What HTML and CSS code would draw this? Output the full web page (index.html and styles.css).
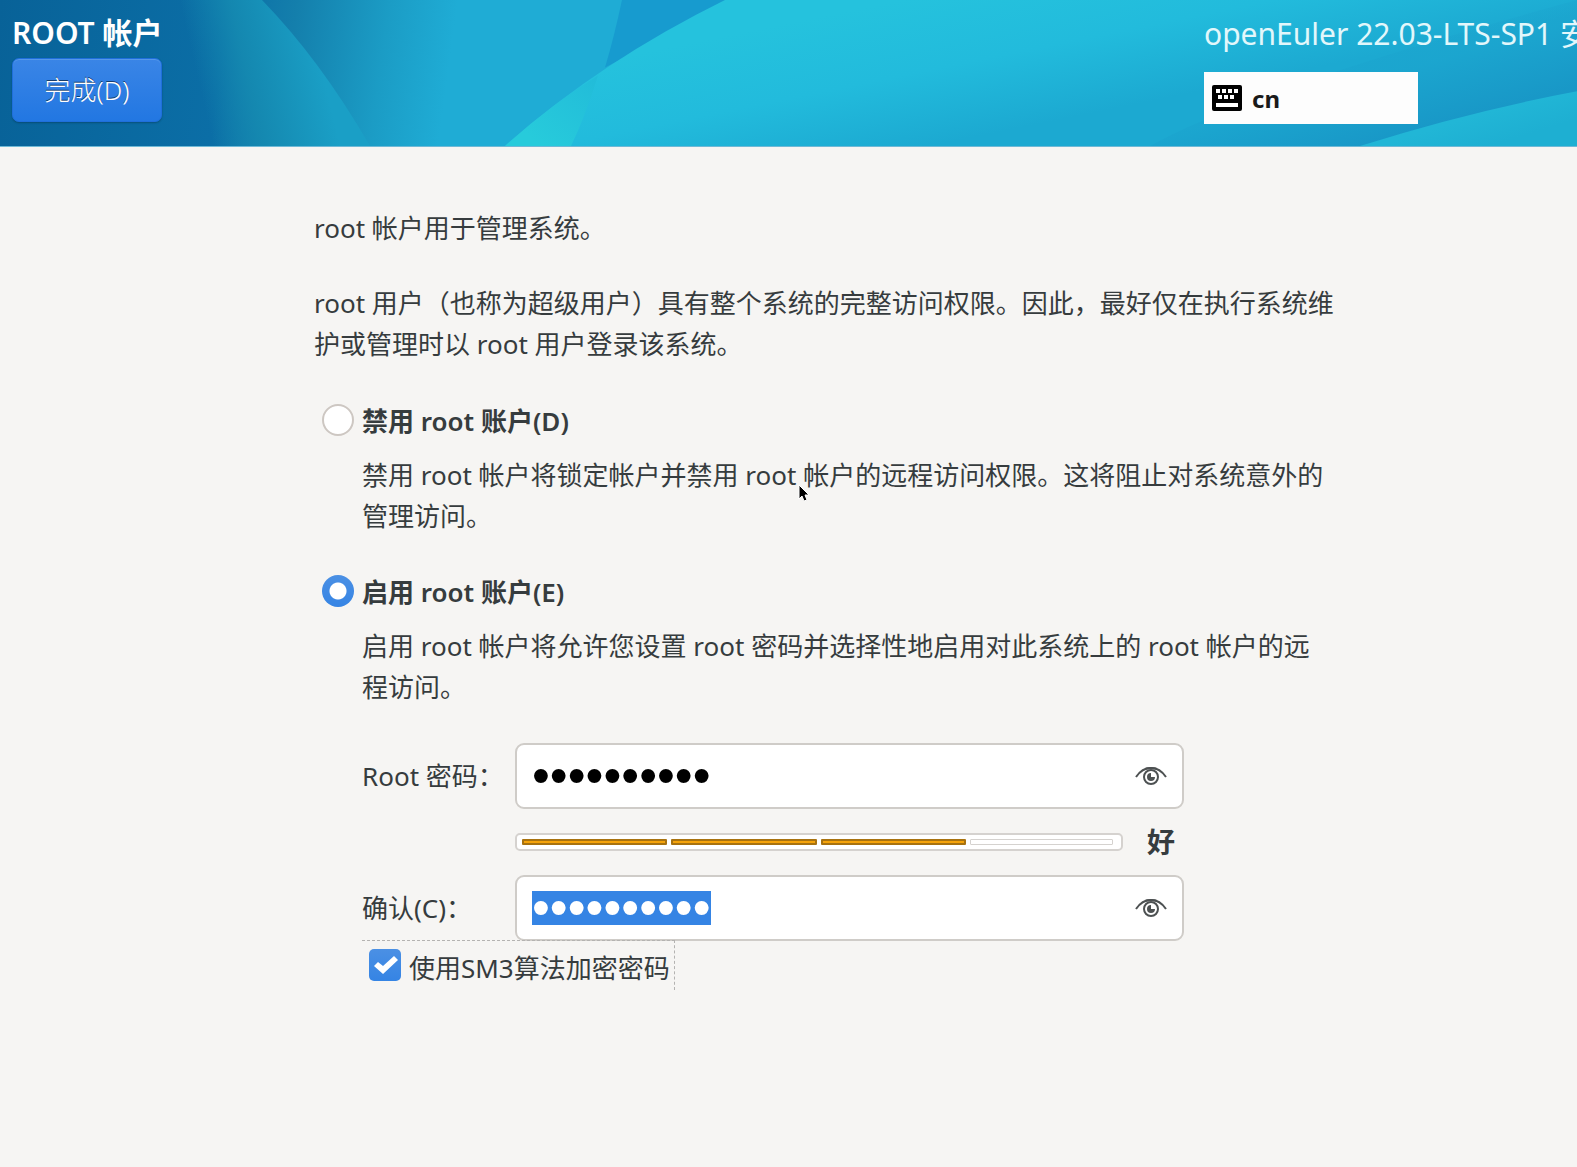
FILE: index.html
```html
<!DOCTYPE html>
<html lang="zh-CN">
<head>
<meta charset="utf-8">
<meta name="viewport" content="width=device-width, initial-scale=1">
<title>ROOT 帐户</title>
<link rel="stylesheet" href="styles.css">
</head>
<body>
<header class="banner">
  <svg class="banner-art" viewBox="0 0 1577 147" preserveAspectRatio="none" aria-hidden="true">
    <defs>
      <linearGradient id="base" gradientUnits="userSpaceOnUse" x1="0" y1="0" x2="450" y2="60">
        <stop offset="0" stop-color="#086298"/>
        <stop offset=".5" stop-color="#0b6ea6"/>
        <stop offset=".65" stop-color="#147fac"/>
        <stop offset=".85" stop-color="#1b9cc5"/>
        <stop offset="1" stop-color="#1facd5"/>
      </linearGradient>
      <linearGradient id="ray" gradientUnits="userSpaceOnUse" x1="200" y1="88" x2="320" y2="60">
        <stop offset="0" stop-color="#148ab0" stop-opacity="0"/>
        <stop offset=".4" stop-color="#158ab1" stop-opacity=".9"/>
        <stop offset="1" stop-color="#1a9fc6"/>
      </linearGradient>
      <linearGradient id="wave" gradientUnits="userSpaceOnUse" x1="900" y1="0" x2="930" y2="147">
        <stop offset="0" stop-color="#25c2dd"/>
        <stop offset=".5" stop-color="#22bbdc"/>
        <stop offset="1" stop-color="#1ca9d1"/>
      </linearGradient>
      <linearGradient id="shade" gradientUnits="userSpaceOnUse" x1="1390" y1="10" x2="1425" y2="130">
        <stop offset="0" stop-color="#1896c6" stop-opacity="0"/>
        <stop offset=".5" stop-color="#1896c6" stop-opacity=".2"/>
        <stop offset="1" stop-color="#1896c6" stop-opacity=".9"/>
      </linearGradient>
      <linearGradient id="glint" gradientUnits="userSpaceOnUse" x1="595" y1="80" x2="540" y2="147">
        <stop offset="0" stop-color="#22bcd9"/>
        <stop offset="1" stop-color="#27cbdb"/>
      </linearGradient>
      <linearGradient id="corner" gradientUnits="userSpaceOnUse" x1="1480" y1="115" x2="1490" y2="147">
        <stop offset="0" stop-color="#21b6d6"/>
        <stop offset="1" stop-color="#1eafd2"/>
      </linearGradient>
    </defs>
    <rect width="1577" height="147" fill="url(#base)"/>
    <path d="M0 0H262Q320 60 370 147H0Z" fill="url(#ray)"/>
    <path d="M622 0Q614 38 605 68L735 0Z" fill="#179bcf"/>
    <path d="M725 0Q600 62 505 147H1577V0Z" fill="url(#wave)"/>
    <path d="M598 76Q550 106 505 147H571Q585 118 598 76Z" fill="url(#glint)"/>
    <path d="M1150 147Q1250 90 1577 0V147Z" fill="url(#shade)"/>
    <path d="M1577 92Q1470 112 1360 147H1577Z" fill="url(#corner)"/>
  </svg>
  <div class="banner-left">
    <h1 class="title">ROOT 帐户</h1>
    <button class="done" type="button">完成(D)</button>
  </div>
  <div class="banner-right">
    <p class="product">openEuler 22.03-LTS-SP1 安装</p>
    <button class="keyboard" type="button">
      <svg width="30" height="26" viewBox="0 0 30 26" aria-hidden="true">
        <rect width="30" height="26" rx="2" fill="#000"/>
        <path fill="#fff" d="M4 4h4v4H4zM10 4h4v4h-4zM16 4h4v4h-4zM22 4h4v4h-4zM6 10h4v4H6zM12 10h4v4h-4zM18 10h4v4h-4zM4 18h22v4H4z"/>
      </svg>
      <span>cn</span>
    </button>
  </div>
</header>

<main class="content">
  <p class="intro">root 帐户用于管理系统。</p>
  <p class="intro">root 用户（也称为超级用户）具有整个系统的完整访问权限。因此，最好仅在执行系统维护或管理时以 root 用户登录该系统。</p>

  <form class="options">
    <section class="option">
      <input class="radio" type="radio" name="root" id="disable">
      <label class="option-title" for="disable">禁用 root 账户(D)</label>
      <p class="option-text">禁用 root 帐户将锁定帐户并禁用 root 帐户的远程访问权限。这将阻止对系统意外的管理访问。</p>
    </section>

    <section class="option">
      <input class="radio" type="radio" name="root" id="enable" checked>
      <label class="option-title" for="enable">启用 root 账户(E)</label>
      <p class="option-text">启用 root 帐户将允许您设置 root 密码并选择性地启用对此系统上的 root 帐户的远程访问。</p>
    </section>

    <div class="fields">
      <label for="password">Root 密码：</label>
      <div class="entry">
        <input class="secret" type="password" id="password" value="openeuler1">
        <button class="reveal" type="button" aria-label="显示密码">
          <svg width="32" height="20" viewBox="0 0 32 20" fill="none" stroke="#4d5152" aria-hidden="true">
            <path stroke-width="2" d="M1 11Q7 2 16 2T31 11"/>
            <path stroke-width="2" d="M10 3Q16 1 22 3"/>
            <circle cx="16" cy="11" r="7" stroke-width="2"/>
            <path fill="#4d5152" stroke="none" d="M16 7a4 4 0 1 0 4 4h-4z"/>
          </svg>
        </button>
      </div>

      <div class="strength">
        <div class="level" role="meter" aria-label="密码强度" aria-valuemin="0" aria-valuemax="4" aria-valuenow="3">
          <span class="block full"></span><span class="block full"></span><span class="block full"></span><span class="block"></span>
        </div>
        <strong class="rating">好</strong>
      </div>

      <label for="confirm">确认(C)：</label>
      <div class="entry">
        <input class="secret selected" type="password" id="confirm" value="openeuler1">
        <button class="reveal" type="button" aria-label="显示密码">
          <svg width="32" height="20" viewBox="0 0 32 20" fill="none" stroke="#4d5152" aria-hidden="true">
            <path stroke-width="2" d="M1 11Q7 2 16 2T31 11"/>
            <path stroke-width="2" d="M10 3Q16 1 22 3"/>
            <circle cx="16" cy="11" r="7" stroke-width="2"/>
            <path fill="#4d5152" stroke="none" d="M16 7a4 4 0 1 0 4 4h-4z"/>
          </svg>
        </button>
      </div>
    </div>

    <label class="sm3">
      <input class="check" type="checkbox" checked>
      <span>使用SM3算法加密密码</span>
    </label>
  </form>
</main>

<svg class="pointer" width="12" height="19" viewBox="0 0 12 19" aria-hidden="true">
  <path d="M1 1V15L4 12L6 17L9 16L7 11H11Z" fill="#000" stroke="#fff" stroke-width="1"/>
</svg>
</body>
</html>
```

FILE: styles.css
```css
* {
  box-sizing: border-box;
}

body {
  margin: 0;
  min-height: 100vh;
  overflow-x: hidden;
  background: #f6f5f3;
  color: #363c3e;
  font-family: "Noto Sans", "Noto Sans CJK SC", sans-serif;
  font-size: 26px;
  line-height: 41px;
}

h1,
p {
  margin: 0;
}

button,
input {
  margin: 0;
  font: inherit;
}

/* Banner */
.banner {
  position: relative;
  display: flex;
  justify-content: space-between;
  height: 147px;
  padding-left: 12px;
  overflow: hidden;
  border-bottom: 1px solid #6fb9d6;
}

.banner-art {
  position: absolute;
  inset: 0;
  width: 100%;
  height: 100%;
}

.banner-left,
.banner-right {
  position: relative;
  display: flex;
  flex-direction: column;
  align-items: flex-start;
}

.banner-left {
  padding-top: 12px;
}

.banner-right {
  flex: 0 0 373px;
  min-width: 0;
  padding-top: 13px;
  gap: 18px;
}

.title {
  color: #fff;
  font-size: 30px;
  font-weight: 600;
  line-height: 41px;
  margin-bottom: 5px;
}

.done {
  width: 150px;
  height: 64px;
  padding: 0;
  border: 1px solid #1f6fdc;
  border-radius: 7px;
  background: linear-gradient(#3a85e6, #2277e2);
  box-shadow: inset 0 1px #5598ea, 0 1px 2px rgba(0, 0, 0, .25);
  color: #fff;
  font-weight: 300;
  text-shadow: 0 -1px rgba(0, 0, 0, .55);
}

.product {
  color: #e2f7fb;
  font-size: 30px;
  white-space: nowrap;
}

.keyboard {
  display: flex;
  align-items: center;
  gap: 10px;
  width: 214px;
  height: 52px;
  padding: 0 8px;
  border: 0;
  background: #fdfdfd;
  color: #1a1a1a;
  font-size: 24px;
  font-weight: 700;
}

/* Content */
.content {
  max-width: 1338px;
  padding: 61px 0 60px 314px;
}

.intro + .intro {
  margin-top: 34px;
}

.options {
  padding: 36px 0 0 8px;
}

.option {
  display: grid;
  grid-template-columns: 32px minmax(0, 968px);
  column-gap: 8px;
  row-gap: 13px;
  margin-bottom: 35px;
}

.option-title {
  font-weight: 600;
}

.option-text {
  grid-column: 2;
}

.radio,
.check {
  appearance: none;
  width: 32px;
  height: 32px;
}

.radio {
  margin-top: 3px;
  border: 2px solid #cdc7c2;
  border-radius: 50%;
  background: #fff;
}

.radio:checked {
  border: 0;
  background: radial-gradient(circle, #fff 8px, transparent 9px), linear-gradient(#4b90e4, #3584e4);
}

.fields {
  display: grid;
  grid-template-columns: 153px 669px;
  grid-auto-rows: 66px;
  align-items: center;
  padding-left: 40px;
}

.entry {
  display: flex;
  align-items: center;
  height: 66px;
  padding: 0 15px;
  border: 2px solid #cfccc8;
  border-radius: 9px;
  background: #fff;
}

.secret {
  flex: 1;
  min-width: 0;
  height: 62px;
  padding: 0;
  border: 0;
  outline: 0;
  background: transparent;
  color: #000;
  font-family: "Liberation Sans", sans-serif;
  font-size: 51px;
  line-height: 62px;
}

/* Highlight behind the selected password */
.selected {
  background: linear-gradient(#3584e4, #3584e4) no-repeat left center / 179px 34px;
  color: #fff;
}

.reveal {
  display: flex;
  padding: 0;
  border: 0;
  background: none;
}

.strength {
  grid-column: 2;
  display: flex;
  align-items: center;
  gap: 24px;
}

.level {
  display: flex;
  gap: 4px;
  width: 608px;
  height: 18px;
  padding: 4px 8px 4px 5px;
  border: 2px solid #d5d2cf;
  border-radius: 5px;
  background: #fff;
}

.block {
  flex: 1;
  height: 6px;
  border: 1px solid #d5d2cf;
  border-radius: 1px;
}

.full {
  border: 2px solid #a8720f;
  background: #f5a30a;
}

.rating {
  font-size: 28px;
}

.sm3 {
  position: relative;
  display: flex;
  align-items: flex-start;
  gap: 8px;
  width: 313px;
  height: 50px;
  margin: -1px 0 0 40px;
  padding: 7px 0 0 7px;
  border: dashed #b4b3b1;
  border-width: 1px 1px 0 0;
  white-space: nowrap;
}

.check {
  margin-top: 1px;
  border-radius: 5px;
  background: linear-gradient(#4b90e4, #3584e4);
}

.check:checked::before {
  content: "";
  display: block;
  width: 32px;
  height: 32px;
  background: #fff;
  clip-path: polygon(5px 17px, 9px 13px, 14px 17px, 25px 7px, 29px 11px, 14px 25px);
}

.pointer {
  position: absolute;
  left: 798px;
  top: 484px;
}
```
